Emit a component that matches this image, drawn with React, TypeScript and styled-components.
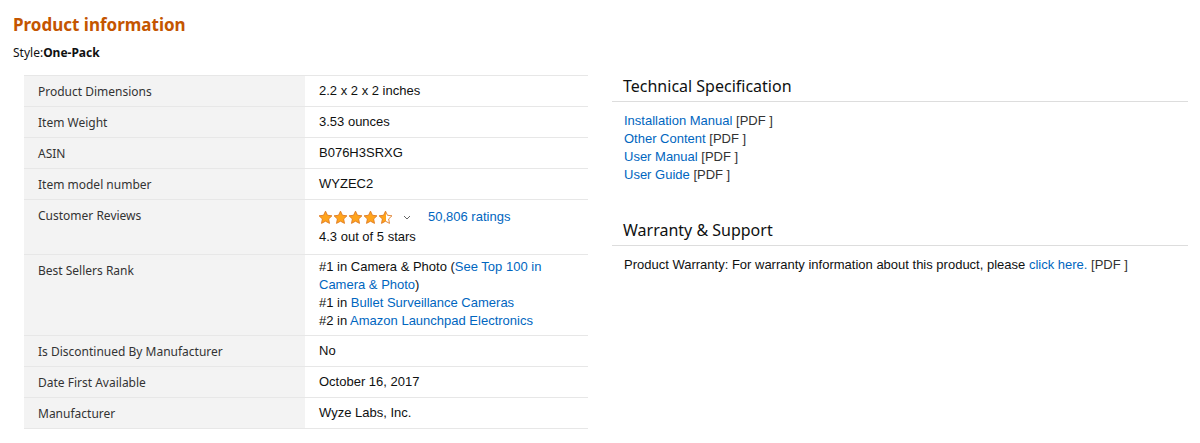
import styled, { createGlobalStyle } from 'styled-components'

const GlobalStyle = createGlobalStyle`
  html, body { margin: 0; padding: 0; background: #fff; }
  body { font-family: Arial, "Liberation Sans", sans-serif; color: #0f1111; }
`

const Page = styled.div`
  width: 1200px;
  height: 443px;
  padding: 13px 12px 0 13px;
  box-sizing: border-box;
  overflow: hidden;
`

const Title = styled.h2`
  margin: 0;
  font-family: "Noto Sans", "Open Sans", sans-serif;
  font-size: 17px;
  line-height: 24px;
  font-weight: 700;
  color: #c45500;
`

const StyleLine = styled.div`
  margin-top: 7px;
  font-family: "Noto Sans", "Open Sans", sans-serif;
  font-size: 12px;
  line-height: 18px;
  b { font-weight: 700; }
`

const Columns = styled.div`
  display: flex;
  gap: 24px;
  margin-top: 13px;
`

const Left = styled.div`
  width: 575px;
  flex-shrink: 0;
  padding-left: 11px;
  box-sizing: border-box;
`

const Table = styled.table`
  width: 100%;
  border-collapse: collapse;
  border-top: 1px solid #e7e7e7;
`

const Row = styled.tr`
  border-bottom: 1px solid #e7e7e7;
`

const Label = styled.th`
  width: 281px;
  box-sizing: border-box;
  background: #f3f3f3;
  text-align: left;
  vertical-align: top;
  font-family: "Noto Sans", "Open Sans", sans-serif;
  font-weight: 400;
  font-size: 12px;
  color: #333;
  padding: 8px 14px 6px;
  line-height: 16px;
`

const Value = styled.td<{ $pt?: number; $pb?: number }>`
  vertical-align: top;
  font-size: 13px;
  line-height: 18px;
  padding: ${p => p.$pt ?? 6}px 13px ${p => p.$pb ?? 6}px 14px;
  color: #0f1111;
`

const Link = styled.a`
  color: #0066c0;
  text-decoration: none;
`

const ReviewLine = styled.div`
  display: flex;
  align-items: center;
  height: 22px;
`

const Stars = styled.span`
  display: inline-flex;
  margin-left: -1px;
`

const Chevron = styled.span`
  margin: 0 17px 0 10px;
  display: inline-flex;
  color: #888;
`

const Right = styled.div`
  flex: 1;
`

const SectionHead = styled.h3`
  margin: 0;
  font-family: "Noto Sans", "Open Sans", sans-serif;
  font-size: 16px;
  font-weight: 400;
  line-height: 22px;
  padding: 0 11px 4px;
  border-bottom: 1px solid #ddd;
  color: #0f1111;
`

const SectionBody = styled.div<{ $gap?: number }>`
  padding: 10px 12px 0;
  font-size: 13px;
  line-height: 18px;
  margin-bottom: ${p => p.$gap ?? 0}px;
`

const Pdf = styled.span`
  color: #333;
`

const StarIcon = ({ fill }: { fill: 'full' | 'half' }) => (
  <svg width="15" height="15" viewBox="0 0 24 24">
    <defs>
      <linearGradient id="halfStar">
        <stop offset="50%" stopColor="#ffa41c" />
        <stop offset="50%" stopColor="#fff" />
      </linearGradient>
    </defs>
    <path
      d="M12 1.8l3.1 6.6 7.2.9-5.3 5 1.4 7.1L12 17.9l-6.4 3.5 1.4-7.1-5.3-5 7.2-.9z"
      fill={fill === 'full' ? '#ffa41c' : 'url(#halfStar)'}
      stroke="#de7921"
      strokeWidth="1.4"
      strokeLinejoin="round"
    />
  </svg>
)

type RowData = { label: string; value: React.ReactNode; pt?: number; pb?: number }

const rows: RowData[] = [
  { label: 'Product Dimensions', value: '2.2 x 2 x 2 inches' },
  { label: 'Item Weight', value: '3.53 ounces' },
  { label: 'ASIN', value: 'B076H3SRXG' },
  { label: 'Item model number', value: 'WYZEC2' },
  {
    label: 'Customer Reviews',
    pt: 6,
    pb: 8,
    value: (
      <>
        <ReviewLine>
          <Stars>
            <StarIcon fill="full" />
            <StarIcon fill="full" />
            <StarIcon fill="full" />
            <StarIcon fill="full" />
            <StarIcon fill="half" />
          </Stars>
          <Chevron>
            <svg width="8" height="5" viewBox="0 0 8 5">
              <path d="M1 1l3 3 3-3" fill="none" stroke="#666" strokeWidth="1" />
            </svg>
          </Chevron>
          <Link href="#">50,806 ratings</Link>
        </ReviewLine>
        <div>4.3 out of 5 stars</div>
      </>
    ),
  },
  {
    label: 'Best Sellers Rank',
    pt: 3,
    pb: 5,
    value: (
      <>
        #1 in Camera &amp; Photo (<Link href="#">See Top 100 in Camera &amp; Photo</Link>)
        <br />
        #1 in <Link href="#">Bullet Surveillance Cameras</Link>
        <br />
        #2 in <Link href="#">Amazon Launchpad Electronics</Link>
      </>
    ),
  },
  { label: 'Is Discontinued By Manufacturer', value: 'No' },
  { label: 'Date First Available', value: 'October 16, 2017' },
  { label: 'Manufacturer', value: 'Wyze Labs, Inc.' },
]

const docs = ['Installation Manual', 'Other Content', 'User Manual', 'User Guide']

export default function App() {
  return (
    <Page>
      <GlobalStyle />
      <Title>Product information</Title>
      <StyleLine>
        Style:<b>One-Pack</b>
      </StyleLine>
      <Columns>
        <Left>
          <Table>
            <tbody>
              {rows.map(r => (
                <Row key={r.label}>
                  <Label>{r.label}</Label>
                  <Value $pt={r.pt} $pb={r.pb}>{r.value}</Value>
                </Row>
              ))}
            </tbody>
          </Table>
        </Left>
        <Right>
          <SectionHead>Technical Specification</SectionHead>
          <SectionBody $gap={35}>
            {docs.map(d => (
              <div key={d}>
                <Link href="#">{d}</Link> <Pdf>[PDF ]</Pdf>
              </div>
            ))}
          </SectionBody>
          <SectionHead>Warranty &amp; Support</SectionHead>
          <SectionBody>
            Product Warranty: For warranty information about this product, please{' '}
            <Link href="#">click here.</Link> <Pdf>[PDF ]</Pdf>
          </SectionBody>
        </Right>
      </Columns>
    </Page>
  )
}
